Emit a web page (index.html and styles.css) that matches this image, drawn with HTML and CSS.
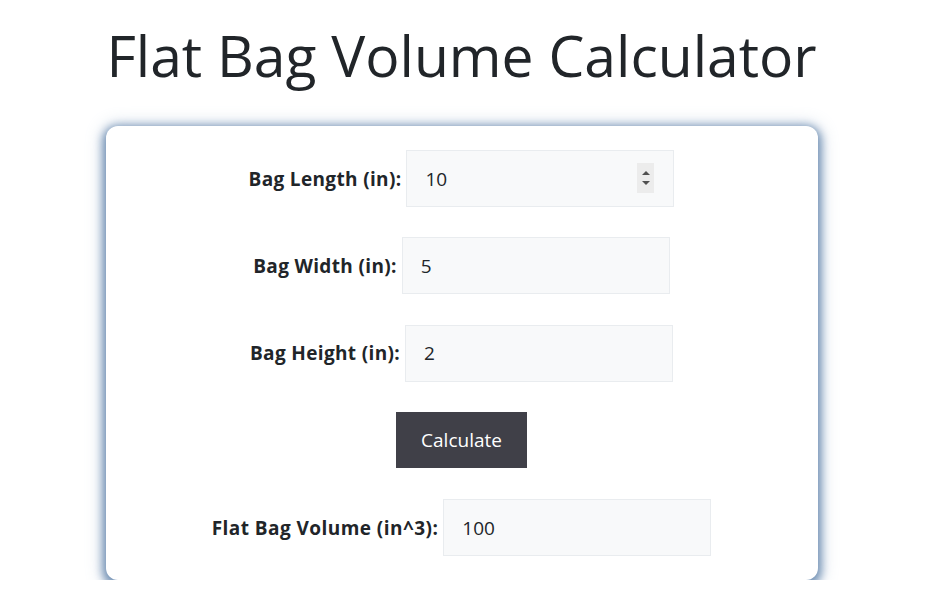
FILE: index.html
```html
<!DOCTYPE html>
<html lang="en">
<head>
<meta charset="utf-8">
<title>Flat Bag Volume Calculator</title>
<link rel="stylesheet" href="styles.css">
</head>
<body>
<div class="page">
<h1 class="title">Flat Bag Volume Calculator</h1>
<div class="card">
  <div class="row">
    <label class="label" for="len">Bag Length (in):</label>
    <div class="field">
      <input class="input" id="len" type="text" value="10">
      <span class="spin"><span class="up"></span><span class="down"></span></span>
    </div>
  </div>
  <div class="row">
    <label class="label" for="wid">Bag Width (in):</label>
    <div class="field"><input class="input" id="wid" type="text" value="5"></div>
  </div>
  <div class="row">
    <label class="label" for="hei">Bag Height (in):</label>
    <div class="field"><input class="input" id="hei" type="text" value="2"></div>
  </div>
  <div class="row">
    <button class="btn" type="button">Calculate</button>
  </div>
  <div class="row">
    <label class="label label-wide" for="vol">Flat Bag Volume (in^3):</label>
    <div class="field"><input class="input" id="vol" type="text" value="100" readonly></div>
  </div>
</div>
</div>
</body>
</html>
```

FILE: styles.css
```css
html, body {
  margin: 0;
  padding: 0;
  background: #ffffff;
}
body {
  font-family: "Open Sans", "Noto Sans", sans-serif;
  color: #212529;
}
.page {
  width: 923px;
}
.title {
  margin: 19px 0 0;
  text-align: center;
  font-weight: 400;
  font-size: 57px;
  line-height: 72px;
  color: #212529;
}
.card {
  width: 712px;
  box-sizing: border-box;
  margin: 35px auto 0;
  padding: 24px;
  background: #fff;
  border-radius: 12px;
  box-shadow: 0 3px 8px 3px #7392b5, 0 2px 16px 4px rgba(140, 165, 195, 0.45);
  display: flex;
  flex-direction: column;
  gap: 30.25px;
}
.row {
  display: flex;
  justify-content: center;
  align-items: center;
  gap: 5px;
  min-height: 57px;
}
.label {
  font-weight: 700;
  font-size: 19px;
  letter-spacing: 0.35px;
}
.label-wide {
  letter-spacing: 0.45px;
}
.field {
  position: relative;
}
.input {
  display: block;
  width: 268px;
  height: 57px;
  box-sizing: border-box;
  padding: 0 18px;
  font-family: inherit;
  font-size: 19px;
  color: #212529;
  background: #f8f9fa;
  border: 1px solid #e9ecef;
  outline: none;
}
.spin {
  position: absolute;
  left: 231px;
  top: 13px;
  width: 17px;
  height: 30px;
  background: #ececec;
  display: flex;
  flex-direction: column;
  align-items: center;
  justify-content: center;
  gap: 6px;
}
.up {
  width: 0;
  height: 0;
  border-left: 4px solid transparent;
  border-right: 4px solid transparent;
  border-bottom: 4px solid #505050;
}
.down {
  width: 0;
  height: 0;
  border-left: 4px solid transparent;
  border-right: 4px solid transparent;
  border-top: 4px solid #505050;
}
.btn {
  width: 131px;
  height: 56px;
  border: none;
  background: #404048;
  color: #fff;
  font-family: inherit;
  font-size: 19px;
  padding: 0;
}
```
